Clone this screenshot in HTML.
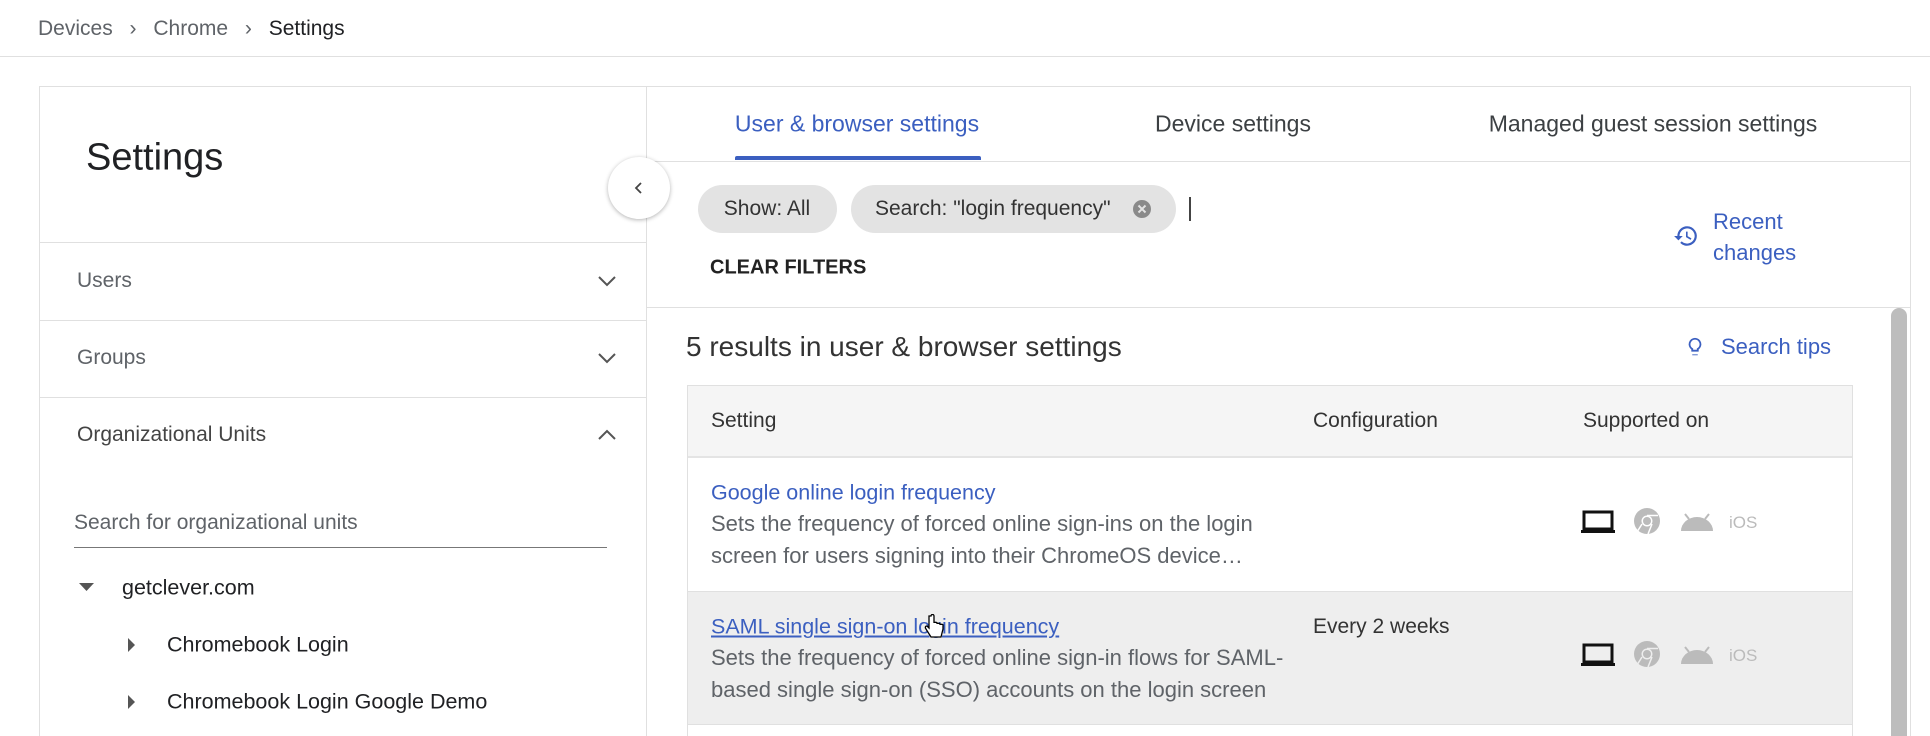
<!DOCTYPE html>
<html style="width:1930px;height:736px;overflow:hidden"><head><meta charset="utf-8"><style>
*{margin:0;padding:0;box-sizing:border-box}
body{width:1930px;height:736px;overflow:hidden;background:#fff;font-family:"Liberation Sans",Arial,sans-serif;color:#202124;position:relative}
.a{position:absolute;white-space:nowrap}
.c{transform:translateY(-50%)}
.m{transform:translate(-50%,-50%)}
.g{color:#5f6368}
.blue{color:#3b5fc0}
</style></head><body>
<div class="a c g" style="left:38px;top:29px;font-size:21px">Devices <span style="margin:0 11px">›</span> Chrome <span style="margin:0 11px">›</span> <span style="color:#202124">Settings</span></div>
<div class="a" style="left:0;top:56px;width:1930px;height:1px;background:#e0e0e0"></div>
<!-- card -->
<div class="a" style="left:39px;top:86px;width:1872px;height:660px;border:1px solid #e0e0e0;border-bottom:none"></div>
<div class="a" style="left:646px;top:86px;width:1px;height:650px;background:#e0e0e0"></div>
<div class="a c" style="left:86px;top:158px;font-size:38px">Settings</div>
<div class="a" style="left:40px;top:242px;width:606px;height:1px;background:#e0e0e0"></div>
<div class="a c g" style="left:77px;top:281px;font-size:21px">Users</div>
<div class="a" style="left:40px;top:320px;width:606px;height:1px;background:#e0e0e0"></div>
<div class="a c g" style="left:77px;top:358px;font-size:21px">Groups</div>
<div class="a" style="left:40px;top:397px;width:606px;height:1px;background:#e0e0e0"></div>
<div class="a c" style="left:77px;top:435px;font-size:21px;color:#444">Organizational Units</div>
<svg class="a" style="left:596px;top:272px" width="22" height="18"><path d="M3 5l8 8 8-8" stroke="#555" stroke-width="2" fill="none"/></svg>
<svg class="a" style="left:596px;top:349px" width="22" height="18"><path d="M3 5l8 8 8-8" stroke="#555" stroke-width="2" fill="none"/></svg>
<svg class="a" style="left:596px;top:426px" width="22" height="18"><path d="M3 13l8-8 8 8" stroke="#555" stroke-width="2" fill="none"/></svg>
<div class="a c g" style="left:74px;top:523px;font-size:21px">Search for organizational units</div>
<div class="a" style="left:74px;top:547px;width:533px;height:1px;background:#777"></div>
<svg class="a" style="left:79px;top:583px" width="16" height="10"><path d="M0 0h15l-7.5 8z" fill="#555"/></svg>
<div class="a c" style="left:122px;top:588px;font-size:21.5px">getclever.com</div>
<svg class="a" style="left:128px;top:638px" width="10" height="15"><path d="M0 0v14l7-7z" fill="#555"/></svg>
<div class="a c" style="left:167px;top:645px;font-size:21.5px">Chromebook Login</div>
<svg class="a" style="left:128px;top:695px" width="10" height="15"><path d="M0 0v14l7-7z" fill="#555"/></svg>
<div class="a c" style="left:167px;top:702px;font-size:21.5px">Chromebook Login Google Demo</div>
<!-- tabs -->
<div class="a" style="left:647px;top:161px;width:1263px;height:1px;background:#e0e0e0"></div>
<div class="a m blue" style="left:857px;top:124px;font-size:23px">User &amp; browser settings</div>
<div class="a" style="left:735px;top:156px;width:246px;height:4px;background:#3b5fc0;border-radius:2px 2px 0 0"></div>
<div class="a m" style="left:1233px;top:124px;font-size:23px;color:#3c4043">Device settings</div>
<div class="a m" style="left:1653px;top:124px;font-size:23px;color:#3c4043">Managed guest session settings</div>
<div class="a" style="left:608px;top:157px;width:62px;height:62px;border-radius:50%;background:#fff;box-shadow:0 1px 4px rgba(0,0,0,.3)"></div>
<svg class="a" style="left:631px;top:180px" width="16" height="16"><path d="M10 3l-5 5 5 5" stroke="#444" stroke-width="1.8" fill="none"/></svg>
<!-- chips -->
<div class="a" style="left:698px;top:185px;width:139px;height:48px;border-radius:24px;background:#e3e3e3"></div>
<div class="a m" style="left:767px;top:209px;font-size:21px;color:#333">Show: All</div>
<div class="a" style="left:851px;top:185px;width:325px;height:48px;border-radius:24px;background:#e3e3e3"></div>
<div class="a c" style="left:875px;top:209px;font-size:21px;color:#333">Search: "login frequency"</div>
<svg class="a" style="left:1132px;top:199px" width="20" height="20"><circle cx="10" cy="10" r="9" fill="#8a8a8a"/><path d="M6.5 6.5l7 7M13.5 6.5l-7 7" stroke="#e3e3e3" stroke-width="2"/></svg>
<div class="a" style="left:1189px;top:197px;width:2px;height:24px;background:#444"></div>
<div class="a c" style="left:710px;top:268px;font-size:20px;font-weight:bold;color:#222">CLEAR FILTERS</div>
<svg class="a" style="left:1673px;top:223px" width="26" height="26" viewBox="0 0 24 24"><path d="M13 3a9 9 0 0 0-9 9H1l4 4 4-4H6a7 7 0 1 1 2.05 4.95l-1.42 1.42A9 9 0 1 0 13 3zm-1 5v5l4.25 2.52.77-1.28-3.52-2.09V8z" fill="#3b5fc0"/></svg>
<div class="a blue" style="left:1713px;top:206px;font-size:22px;line-height:31px">Recent<br>changes</div>
<div class="a" style="left:647px;top:307px;width:1263px;height:1px;background:#e0e0e0"></div>
<div class="a c" style="left:686px;top:347px;font-size:28px;color:#333">5 results in user &amp; browser settings</div>
<svg class="a" style="left:1684px;top:335px" width="22" height="24" viewBox="0 0 24 24"><path d="M9 21h6v-1H9zM12 2a7 7 0 0 0-4 12.7V17h8v-2.3A7 7 0 0 0 12 2zm2.85 11.1l-.85.6V15h-4v-1.3l-.85-.6a5 5 0 1 1 5.7 0z" fill="#3b5fc0"/></svg>
<div class="a c blue" style="left:1721px;top:347px;font-size:22px">Search tips</div>
<div class="a" style="left:1891px;top:308px;width:16px;height:428px;background:#bdbdbd;border-radius:8px 8px 0 0"></div>
<!-- table -->
<div class="a" style="left:687px;top:385px;width:1166px;height:360px;border:1px solid #e0e0e0;border-bottom:none"></div>
<div class="a" style="left:688px;top:386px;width:1164px;height:72px;background:#f5f5f5;border-bottom:2px solid #e4e4e4"></div>
<div class="a c" style="left:711px;top:421px;font-size:21px;color:#333">Setting</div>
<div class="a c" style="left:1313px;top:421px;font-size:21px;color:#333">Configuration</div>
<div class="a c" style="left:1583px;top:421px;font-size:21px;color:#333">Supported on</div>
<div class="a" style="left:688px;top:591px;width:1164px;height:1px;background:#e0e0e0"></div>
<div class="a" style="left:688px;top:592px;width:1164px;height:133px;background:#eeeeee;border-bottom:1px solid #e0e0e0"></div>
<div class="a c blue" style="left:711px;top:493px;font-size:21.5px">Google online login frequency</div>
<div class="a g" style="left:711px;top:508px;font-size:22px;line-height:32px">Sets the frequency of forced online sign-ins on the login<br>screen for users signing into their ChromeOS device…</div>
<div class="a c blue" style="left:711px;top:627px;font-size:21.5px;text-decoration:underline">SAML single sign-on login frequency</div>
<div class="a g" style="left:711px;top:642px;font-size:22px;line-height:32px">Sets the frequency of forced online sign-in flows for SAML-<br>based single sign-on (SSO) accounts on the login screen</div>
<div class="a c" style="left:1313px;top:627px;font-size:21px;color:#333">Every 2 weeks</div>
<svg class="a" style="left:1581px;top:508px" width="184" height="28" viewBox="0 0 184 28">
<path d="M3 4h28v17H3z" fill="none" stroke="#111" stroke-width="3"/><path d="M0 22h34v3H0z" fill="#111"/>
<circle cx="66" cy="13" r="13" fill="#bbb"/><circle cx="66" cy="13" r="5.5" fill="#fff"/><circle cx="66" cy="13" r="4" fill="#bbb"/><path d="M66 7.5h11M61 16l-5 8M71 16l-4 10" stroke="#fff" stroke-width="1.5"/>
<path d="M100 23a16 14 0 0 1 32 0z" fill="#bbb"/><path d="M104 6l4 5M128 6l-4 5" stroke="#bbb" stroke-width="2"/>
<text x="148" y="20" font-size="17" fill="#bbb" font-family="Liberation Sans">iOS</text></svg>
<svg class="a" style="left:1581px;top:641px" width="184" height="28" viewBox="0 0 184 28">
<path d="M3 4h28v17H3z" fill="none" stroke="#111" stroke-width="3"/><path d="M0 22h34v3H0z" fill="#111"/>
<circle cx="66" cy="13" r="13" fill="#bbb"/><circle cx="66" cy="13" r="5.5" fill="#eee"/><circle cx="66" cy="13" r="4" fill="#bbb"/><path d="M66 7.5h11M61 16l-5 8M71 16l-4 10" stroke="#eee" stroke-width="1.5"/>
<path d="M100 23a16 14 0 0 1 32 0z" fill="#bbb"/><path d="M104 6l4 5M128 6l-4 5" stroke="#bbb" stroke-width="2"/>
<text x="148" y="20" font-size="17" fill="#bbb" font-family="Liberation Sans">iOS</text></svg>
<svg class="a" style="left:924px;top:614px" width="20" height="28"><path d="M5 2v12l-2-2c-2 0-2 2-1 3l5 8h10l2-8v-4c0-1-3-1-3 0v-1c0-1-3-1-3 0v-1c0-1-3-1-3 0V2c0-2-3-2-3 0z" fill="#fff" stroke="#000" stroke-width="1.3"/></svg>
</body></html>
